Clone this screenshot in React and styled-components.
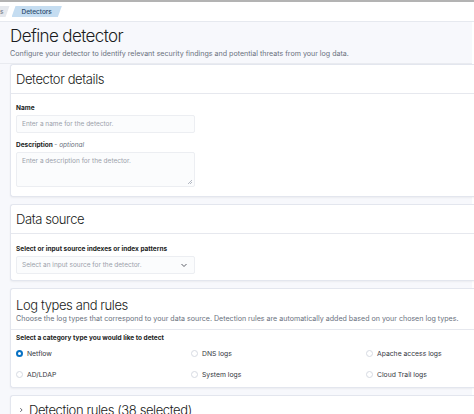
import React from "react";
import styled, { createGlobalStyle } from "styled-components";

const GlobalStyle = createGlobalStyle`
  html, body {
    margin: 0;
    padding: 0;
    background: #ffffff;
    font-family: Inter, "Noto Sans", sans-serif;
    color: #1a1c21;
  }
  * { box-sizing: border-box; }
`;

const logTypes = [
  { label: "Netflow", checked: true },
  { label: "DNS logs" },
  { label: "Apache access logs" },
  { label: "AD/LDAP" },
  { label: "System logs" },
  { label: "Cloud Trail logs" },
];

function App() {
  return (
    <>
      <GlobalStyle />
      <Page>
        <TopBar />
        <Breadcrumbs>
          <Crumb>s</Crumb>
          <Crumb $active>Detectors</Crumb>
        </Breadcrumbs>
        <Main>
          <PageHeader>
            <PageTitle>Define detector</PageTitle>
            <PageText>
              Configure your detector to identify relevant security findings and
              potential threats from your log data.
            </PageText>
          </PageHeader>

          <Panel $first>
            <PanelHead>
              <PanelTitle>Detector details</PanelTitle>
            </PanelHead>
            <PanelBody $top={10} $bottom={9} $gap={8}>
              <Field>
                <Label>Name</Label>
                <Input placeholder="Enter a name for the detector." />
              </Field>
              <Field>
                <Label>
                  Description <Optional>- optional</Optional>
                </Label>
                <TextArea placeholder="Enter a description for the detector." />
              </Field>
            </PanelBody>
          </Panel>

          <Panel>
            <PanelHead>
              <PanelTitle>Data source</PanelTitle>
            </PanelHead>
            <PanelBody $top={11} $bottom={6} $gap={8}>
              <Field>
                <Label>Select or input source indexes or index patterns</Label>
                <Select>
                  <span>Select an input source for the detector.</span>
                  <svg width="8" height="8" viewBox="0 0 16 16">
                    <path
                      d="M3 6l5 5 5-5"
                      fill="none"
                      stroke="#343741"
                      strokeWidth="1.6"
                    />
                  </svg>
                </Select>
              </Field>
            </PanelBody>
          </Panel>

          <Panel>
            <PanelHead $tall>
              <PanelTitle>Log types and rules</PanelTitle>
              <PanelText>
                Choose the log types that correspond to your data source.
                Detection rules are automatically added based on your chosen log
                types.
              </PanelText>
            </PanelHead>
            <PanelBody $top={4} $bottom={8} $gap={6}>
              <Label>Select a category type you would like to detect</Label>
              <RadioGrid>
                {logTypes.map((t) => (
                  <RadioItem key={t.label}>
                    <Radio $checked={t.checked} />
                    {t.label}
                  </RadioItem>
                ))}
              </RadioGrid>
            </PanelBody>
          </Panel>

          <Panel>
            <AccordionHead>
              <svg width="6" height="6" viewBox="0 0 16 16">
                <path
                  d="M6 3l5 5-5 5"
                  fill="none"
                  stroke="#343741"
                  strokeWidth="2"
                />
              </svg>
              <PanelTitle>Detection rules (38 selected)</PanelTitle>
            </AccordionHead>
          </Panel>
        </Main>
      </Page>
    </>
  );
}

const Page = styled.div`
  width: 474px;
  height: 414px;
  overflow: hidden;
  background: #ffffff;
`;

const TopBar = styled.div`
  height: 2px;
  background: #b3b3b3;
`;

const Breadcrumbs = styled.div`
  display: flex;
  align-items: center;
  height: 20px;
  margin-left: -10px;
  gap: 2px;
  border-bottom: 1px solid #e6e9ef;
`;

const Crumb = styled.div`
  height: 11px;
  padding: 0 ${(p) => (p.$active ? "10px" : "6px")} 0 10px;
  display: flex;
  align-items: center;
  font-size: 6.5px;
  font-weight: 500;
  color: ${(p) => (p.$active ? "#2a4a6b" : "#7a808c")};
  background: ${(p) => (p.$active ? "#c5ddf1" : "#e5e8ed")};
  clip-path: polygon(4px 0, 100% 0, calc(100% - 4px) 100%, 0 100%);
`;

const Main = styled.div`
  width: 472px;
  background: #f7f8fc;
  padding: 0 0 0 10px;
  display: flex;
  flex-direction: column;
`;

const PageHeader = styled.div`
  padding: 3px 0 4px 10px;
  margin-left: -10px;
  border-bottom: 1px solid #e9ebf0;
`;

const PageTitle = styled.h1`
  margin: 0;
  font-size: 17px;
  font-weight: 300;
  letter-spacing: -0.6px;
  line-height: 22px;
  color: #1a1c21;
`;

const PageText = styled.p`
  margin: 2px 0 0;
  font-size: 7.1px;
  line-height: 10px;
  color: #69707d;
`;

const Panel = styled.section`
  margin-top: ${(p) => (p.$first ? "0" : "7px")};
  background: #ffffff;
  border: 1px solid #e3e6ee;
  border-right: none;
  border-radius: 3px 0 0 3px;
  box-shadow: 0 1px 2px rgba(0, 0, 0, 0.05);
  margin-right: -4px;
`;

const PanelHead = styled.div`
  padding: ${(p) => (p.$tall ? "8px 5px 5px" : "6px 5px 6px")};
  border-bottom: 1px solid #e6e8ee;
`;

const PanelTitle = styled.h2`
  margin: 0;
  font-size: 13px;
  font-weight: 300;
  letter-spacing: -0.4px;
  line-height: 16px;
  color: #1a1c21;
`;

const PanelText = styled.p`
  margin: 1px 0 0;
  font-size: 7.1px;
  line-height: 10px;
  color: #69707d;
  white-space: nowrap;
`;

const PanelBody = styled.div`
  padding: ${(p) => p.$top}px 5px ${(p) => p.$bottom}px;
  display: flex;
  flex-direction: column;
  gap: ${(p) => p.$gap}px;
`;

const Field = styled.div`
  display: flex;
  flex-direction: column;
  gap: 2px;
`;

const Label = styled.div`
  font-size: 6.5px;
  font-weight: 700;
  line-height: 9px;
  color: #1a1c21;
`;

const Optional = styled.span`
  font-weight: 400;
  font-style: italic;
  color: #69707d;
`;

const inputBase = `
  width: 179px;
  background-color: #fbfcfd;
  border: 1px solid #eceef2;
  border-radius: 2px;
  font-family: Inter, "Noto Sans", sans-serif;
  font-size: 6.5px;
  color: #343741;
  padding: 0 5px;
  outline: none;
  &::placeholder { color: #9aa0aa; }
`;

const Input = styled.input`
  ${inputBase}
  height: 18px;
`;

const TextArea = styled.textarea`
  ${inputBase}
  display: block;
  height: 35px;
  padding-top: 4px;
  resize: none;
  background-image: linear-gradient(
    135deg,
    transparent 0 50%,
    #b5bac4 50% 60%,
    transparent 60% 75%,
    #b5bac4 75% 85%,
    transparent 85%
  );
  background-size: 4px 4px;
  background-position: right 2px bottom 2px;
  background-repeat: no-repeat;
`;

const Select = styled.div`
  ${inputBase}
  height: 18px;
  display: flex;
  align-items: center;
  justify-content: space-between;
  color: #9aa0aa;
  padding-right: 6px;
`;

const RadioGrid = styled.div`
  display: grid;
  grid-template-columns: repeat(3, 175px);
  row-gap: 12px;
`;

const RadioItem = styled.label`
  display: flex;
  align-items: center;
  gap: 4px;
  font-size: 6.8px;
  line-height: 9px;
  color: #343741;
`;

const Radio = styled.span`
  width: 7px;
  height: 7px;
  border-radius: 50%;
  background: #ffffff;
  border: ${(p) => (p.$checked ? "2px solid #0771c4" : "1px solid #d6dae2")};
`;

const AccordionHead = styled.div`
  display: flex;
  align-items: center;
  gap: 5px;
  padding: 6px 5px 10px 7px;
`;

export default App;
